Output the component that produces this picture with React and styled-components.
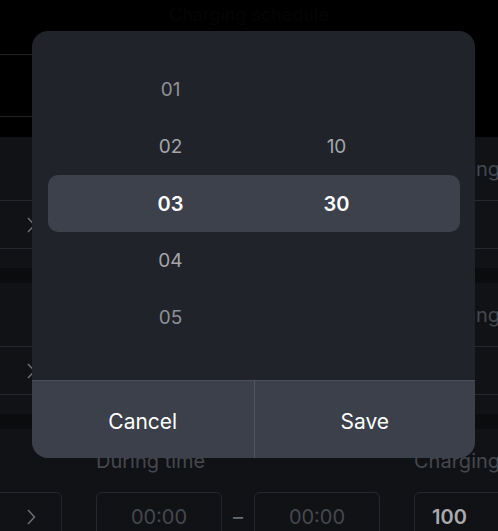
import React from 'react';
import styled, { createGlobalStyle } from 'styled-components';

const GlobalStyle = createGlobalStyle`
  html, body {
    margin: 0;
    padding: 0;
    background: #000;
  }
  body {
    font-family: Inter, 'Noto Sans', sans-serif;
  }
`;

const Page = styled.div`
  position: relative;
  width: 100%;
  height: 531px;
  overflow: hidden;
  background: #000;
`;

const Header = styled.div`
  height: 137px;
  display: flex;
  flex-direction: column;
`;

const Title = styled.div`
  height: 54px;
  display: flex;
  align-items: flex-start;
  justify-content: center;
  padding-top: 4px;
  box-sizing: border-box;
  font-size: 18px;
  color: #050505;
`;

const TabBar = styled.div`
  height: 63px;
  width: 460px;
  margin-left: -10px;
  box-sizing: border-box;
  border: 1px solid #1d2025;
  border-radius: 8px;
`;

const Section = styled.div`
  display: grid;
  grid-template-columns: 100px 284px 140px;
  column-gap: 34px;
  row-gap: 19px;
  padding: 20px 0 19px;
  margin-left: -38px;
  background: #111216;
`;

const Separator = styled.div`
  height: 15px;
  background: #0b0c0e;
`;

const Label = styled.div`
  font-size: 20px;
  line-height: 24px;
  color: #45484e;
  white-space: nowrap;
`;

const SelectBox = styled.div`
  height: 49px;
  box-sizing: border-box;
  border: 1px solid #25282e;
  border-radius: 6px;
  display: flex;
  align-items: center;
  justify-content: flex-end;
  padding-right: 25px;
`;

const TimeRange = styled.div`
  display: flex;
  align-items: center;
`;

const InputBox = styled.div`
  width: ${p => p.$width || 126}px;
  height: 49px;
  box-sizing: border-box;
  border: 1px solid #25282e;
  border-radius: 6px;
  display: flex;
  align-items: center;
  justify-content: ${p => (p.$start ? 'flex-start' : 'center')};
  padding: 0 17px;
  font-size: 20px;
  font-weight: ${p => (p.$value ? 600 : 400)};
  color: ${p => (p.$value ? '#a9abae' : '#45484d')};
`;

const Dash = styled.div`
  width: 32px;
  text-align: center;
  font-size: 20px;
  color: #6a6d72;
`;

const Modal = styled.div`
  position: absolute;
  top: 31px;
  left: 32px;
  width: 443px;
  height: 427px;
  background: #202329;
  border-radius: 16px;
  overflow: hidden;
  display: flex;
  flex-direction: column;
`;

const Wheel = styled.div`
  position: relative;
  height: 350px;
  display: flex;
  justify-content: center;
  overflow: hidden;
`;

const Highlight = styled.div`
  position: absolute;
  top: 144px;
  left: 16px;
  right: 15px;
  height: 57px;
  border-radius: 10px;
  background: #3c414c;
`;

const Column = styled.div`
  position: relative;
  width: 166px;
  display: flex;
  flex-direction: column;
`;

const Item = styled.div`
  height: 57px;
  flex-shrink: 0;
  display: flex;
  align-items: center;
  justify-content: center;
  font-size: ${p => (p.$dist === 0 ? 20 : 19)}px;
  font-weight: ${p => (p.$dist === 0 ? 600 : 400)};
  color: ${p => (p.$dist === 0 ? '#ffffff' : p.$dist === 1 ? '#a4a6aa' : '#8e9196')};
`;

const Actions = styled.div`
  display: grid;
  grid-template-columns: 1fr 1fr;
  height: 77px;
  border-top: 1px solid #4a505a;
  background: #3b404a;
`;

const ActionButton = styled.button`
  background: transparent;
  border: none;
  color: #fff;
  font-family: Inter, 'Noto Sans', sans-serif;
  font-size: 21px;
  font-weight: 400;
  padding: 4px 0 0;

  & + & {
    border-left: 1px solid #4f5561;
  }
`;

const Chevron = () => (
  <svg width="10" height="18" viewBox="0 0 10 18">
    <polyline points="2,2 8.5,9 2,16" fill="none" stroke="#6b6e73" strokeWidth="1.5" />
  </svg>
);

const ROW = 57;
const TOP = 30;

const PickerColumn = ({ items, selected }) => {
  const idx = items.indexOf(selected);
  return (
    <Column style={{ paddingTop: TOP + (2 - idx) * ROW }}>
      {items.map((v, i) => (
        <Item key={v} $dist={Math.abs(i - idx)}>{v}</Item>
      ))}
    </Column>
  );
};

const ScheduleSection = () => (
  <Section>
    <div />
    <Label>During time</Label>
    <Label>Charging power</Label>
    <SelectBox>
      <Chevron />
    </SelectBox>
    <TimeRange>
      <InputBox>00:00</InputBox>
      <Dash>–</Dash>
      <InputBox>00:00</InputBox>
    </TimeRange>
    <InputBox $width={140} $start $value>100</InputBox>
  </Section>
);

export default function App() {
  return (
    <>
      <GlobalStyle />
      <Page>
        <Header>
          <Title>Charging schedule</Title>
          <TabBar />
        </Header>
        <ScheduleSection />
        <Separator />
        <ScheduleSection />
        <Separator />
        <ScheduleSection />

        <Modal>
          <Wheel>
            <Highlight />
            <PickerColumn items={['01', '02', '03', '04', '05']} selected="03" />
            <PickerColumn items={['10', '30']} selected="30" />
          </Wheel>
          <Actions>
            <ActionButton>Cancel</ActionButton>
            <ActionButton>Save</ActionButton>
          </Actions>
        </Modal>
      </Page>
    </>
  );
}
